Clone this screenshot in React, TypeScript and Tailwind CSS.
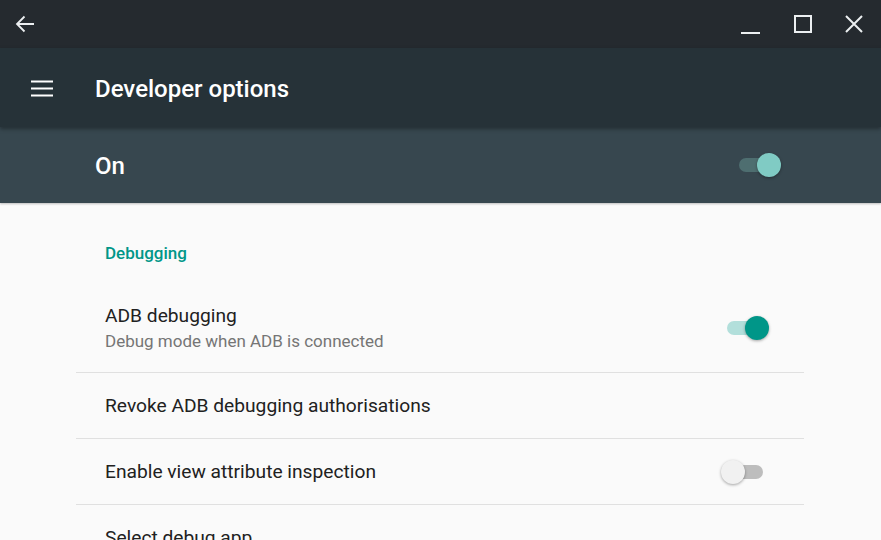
import React from 'react';

const Toggle = ({ on, dark }: { on: boolean; dark?: boolean }) => {
  const track = dark ? 'bg-[#4e6e70]' : on ? 'bg-[#b2dfdb]' : 'bg-[#bdbdbd]';
  const thumb = dark ? 'bg-[#80cbc4]' : on ? 'bg-[#009688]' : 'bg-[#f1f1f1]';
  return (
    <div className={`relative w-[36px] h-[14px] rounded-full ${track}`}>
      <div
        className={`absolute top-[-5px] w-[24px] h-[24px] rounded-full shadow-[0_1px_3px_rgba(0,0,0,0.35)] ${thumb} ${
          on ? 'left-[18px]' : 'left-[-6px]'
        }`}
      />
    </div>
  );
};

const rows = [
  { title: 'Revoke ADB debugging authorisations' },
  { title: 'Enable view attribute inspection', toggle: false },
  { title: 'Select debug app' },
];

export default function App() {
  return (
    <div
      className="w-[881px] h-[540px] overflow-hidden bg-[#fafafa]"
      style={{ fontFamily: 'Roboto, "Noto Sans", sans-serif' }}
    >
      {/* Window title bar */}
      <div className="h-[48px] bg-[#252a2f] flex items-center justify-between">
        <svg className="ml-[13px]" width="24" height="24" viewBox="0 0 24 24">
          <path d="M21 12H4.5M11.5 4.5L4 12l7.5 7.5" fill="none" stroke="#eceff1" strokeWidth="1.8" />
        </svg>
        <div className="flex items-center h-full">
          <svg width="24" height="24" viewBox="0 0 24 24" className="mr-[28px]">
            <path d="M2 21h19" stroke="#eceff1" strokeWidth="2" />
          </svg>
          <svg width="24" height="24" viewBox="0 0 24 24" className="mr-[27px]">
            <rect x="4" y="4" width="16" height="16" fill="none" stroke="#eceff1" strokeWidth="2" />
          </svg>
          <svg width="24" height="24" viewBox="0 0 24 24" className="mr-[15px]">
            <path d="M4 4l16 16M20 4L4 20" stroke="#eceff1" strokeWidth="2" />
          </svg>
        </div>
      </div>

      {/* Toolbar */}
      <div className="relative z-10 h-[79px] bg-[#263238] flex items-center shadow-[0_2px_4px_rgba(0,0,0,0.35)]">
        <svg className="ml-[30px] mt-[1px]" width="24" height="24" viewBox="0 0 24 24">
          <path d="M1 5.5h22M1 12.5h22M1 19.5h22" stroke="#ffffff" strokeWidth="2" />
        </svg>
        <span className="ml-[41px] mt-[2px] text-[24px] font-medium text-white leading-none">Developer options</span>
      </div>

      {/* Master switch bar */}
      <div className="h-[76px] bg-[#37474f] flex items-center justify-between pl-[95px] pr-[106px] shadow-[0_1px_2px_rgba(0,0,0,0.25)]">
        <span className="mt-[1px] text-[24px] font-medium text-white leading-none">On</span>
        <Toggle on dark />
      </div>

      {/* Settings list */}
      <div className="ml-[76px] w-[728px]">
        <div className="h-[80px] pt-[40px] pl-[29px]">
          <div className="text-[17px] leading-[20px] font-medium text-[#009688]">Debugging</div>
        </div>

        <div className="flex items-center justify-between pl-[29px] pr-[41px] pt-[21px] pb-[21px] border-b border-[#e0e0e0]">
          <div>
            <div className="text-[19.2px] leading-[24px] text-[#212121]">ADB debugging</div>
            <div className="mt-[3px] text-[17px] leading-[20px] text-[#757575]">Debug mode when ADB is connected</div>
          </div>
          <Toggle on />
        </div>

        {rows.map((r) => (
          <div
            key={r.title}
            className="h-[66px] flex items-center justify-between pl-[29px] pr-[41px] border-b border-[#e0e0e0]"
          >
            <span className="mt-[2px] text-[19.2px] text-[#212121]">{r.title}</span>
            {r.toggle !== undefined && <Toggle on={r.toggle} />}
          </div>
        ))}
      </div>
    </div>
  );
}
